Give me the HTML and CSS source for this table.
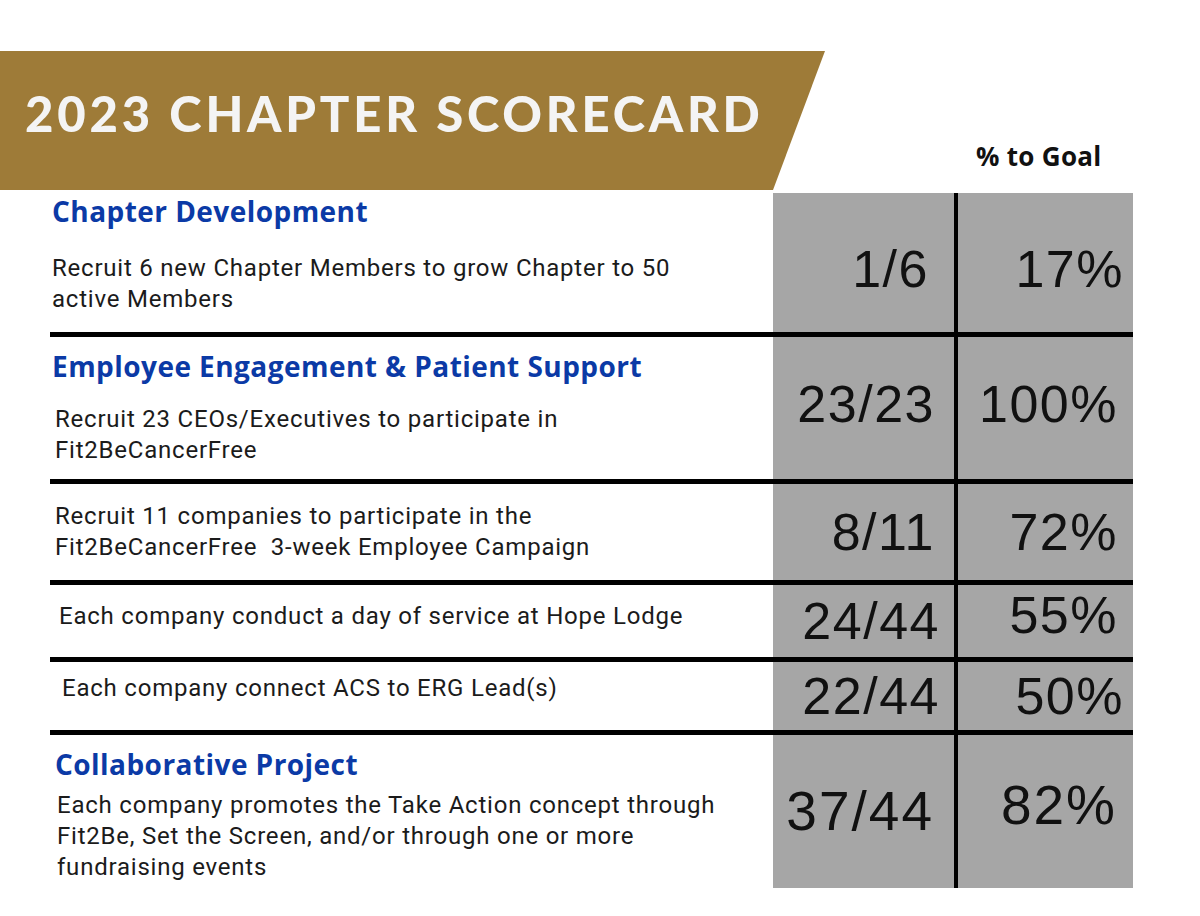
FILE: index.html
```html
<!DOCTYPE html>
<html lang="en">
<head>
<meta charset="utf-8">
<title>2023 Chapter Scorecard</title>
<link rel="stylesheet" href="styles.css">
</head>
<body>
<div class="page">
  <header class="header">
    <div class="banner"><h1 class="title">2023 CHAPTER SCORECARD</h1></div>
    <div class="goal-label">% to Goal</div>
  </header>

  <div class="table">
    <div class="row r1">
      <div class="desc ind-2">
        <h2 class="section">Chapter Development</h2>
        <p class="text first-1">Recruit 6 new Chapter Members to grow Chapter to 50<br>active Members</p>
      </div>
      <div class="num shift-down pad-r1">1/6</div>
      <div class="pct shift-down pad-p1">17%</div>
    </div>

    <div class="row r2">
      <div class="desc ind-2">
        <h2 class="section">Employee Engagement &amp; Patient Support</h2>
        <p class="text first-2 nudge">Recruit 23 CEOs/Executives to participate in<br>Fit2BeCancerFree</p>
      </div>
      <div class="num shift-up">23/23</div>
      <div class="pct shift-up">100%</div>
    </div>

    <div class="row r3">
      <div class="desc ind-5">
        <p class="text">Recruit 11 companies to participate in the<br>Fit2BeCancerFree&nbsp; 3-week Employee Campaign</p>
      </div>
      <div class="num">8/11</div>
      <div class="pct">72%</div>
    </div>

    <div class="row r4">
      <div class="desc ind-9">
        <p class="text">Each company conduct a day of service at Hope Lodge</p>
      </div>
      <div class="num pad-r4">24/44</div>
      <div class="pct shift-up-more">55%</div>
    </div>

    <div class="row r5">
      <div class="desc ind-12">
        <p class="text">Each company connect ACS to ERG Lead(s)</p>
      </div>
      <div class="num pad-r4">22/44</div>
      <div class="pct pad-p5">50%</div>
    </div>

    <div class="row r6">
      <div class="desc ind-5">
        <h2 class="section">Collaborative Project</h2>
        <p class="text first-6 nudge-sm">Each company promotes the Take Action concept through<br>Fit2Be, Set the Screen, and/or through one or more<br>fundraising events</p>
      </div>
      <div class="num big">37/44</div>
      <div class="pct big shift-up-more">82%</div>
    </div>
  </div>
</div>
</body>
</html>
```

FILE: styles.css
```css
* { box-sizing: border-box; }

html, body {
  margin: 0;
  padding: 0;
  background: #ffffff;
}

.page {
  width: 1200px;
  height: 916px;
  padding-top: 51px;
  overflow: hidden;
}

/* ---------- header ---------- */
.header {
  display: flex;
  align-items: flex-start;
}

.banner {
  width: 825px;
  height: 139px;
  background: #9e7b38;
  clip-path: polygon(0 0, 825px 0, 773px 100%, 0 100%);
  padding: 38px 0 0 25px;
  flex: none;
}

.title {
  margin: 0;
  font-family: Lato, "Open Sans", sans-serif;
  font-weight: 900;
  font-size: 49px;
  line-height: 49px;
  letter-spacing: 3.8px;
  color: #f4f4f4;
  white-space: nowrap;
}

.goal-label {
  margin: 87px 0 0 151px;
  font-family: "Open Sans", "Noto Sans", sans-serif;
  font-weight: 700;
  font-size: 26px;
  letter-spacing: 0.3px;
  color: #111111;
  white-space: nowrap;
}

/* ---------- table ---------- */
.table {
  margin: 3px 0 0 50px;
  width: 1083px;
}

.row {
  display: grid;
  grid-template-columns: 723px 181px 179px;
  border-bottom: 5px solid #000000;
}

.row.r6 { border-bottom: none; }

.r1 { height: 144px; }
.r2 { height: 147px; }
.r3 { height: 101px; }
.r4 { height: 77px; }
.r5 { height: 73px; }
.r6 { height: 153px; }

.desc {
  background: #ffffff;
  color: #1b1b1b;
}

.r1 .desc { padding-top: 1px; }
.r2 .desc { padding-top: 12px; }
.r3 .desc { padding-top: 17px; }
.r4 .desc { padding-top: 16px; }
.r5 .desc { padding-top: 11px; }
.r6 .desc { padding-top: 12px; }

.ind-2 { padding-left: 2px; }
.ind-5 { padding-left: 5px; }
.ind-9 { padding-left: 9px; }
.ind-12 { padding-left: 12px; }

.section {
  margin: 0;
  font-family: "Open Sans", "Noto Sans", sans-serif;
  font-weight: 700;
  font-size: 28px;
  line-height: 34px;
  letter-spacing: 0.45px;
  color: #0b3aa6;
  white-space: nowrap;
}

.text {
  margin: 0;
  font-family: Roboto, "Noto Sans", sans-serif;
  font-weight: 400;
  font-size: 24px;
  line-height: 31px;
  letter-spacing: 0.78px;
  color: #1b1b1b;
  white-space: nowrap;
}

.first-1 { margin-top: 25px; }
.first-2 { margin-top: 21px; }
.first-6 { margin-top: 9px; }
.nudge { padding-left: 3px; }
.nudge-sm { padding-left: 2px; }

.num, .pct {
  background: #a6a6a6;
  display: flex;
  align-items: center;
  justify-content: flex-end;
  font-family: "Liberation Sans", Arial, sans-serif;
  font-size: 52px;
  letter-spacing: 1.5px;
  color: #111111;
  line-height: 1;
}

.num { padding-right: 19px; }

.pct {
  border-left: 4px solid #000000;
  padding-right: 15px;
}

.num.pad-r1 { padding-right: 25px; }
.num.pad-r4 { padding-right: 14px; }
.pct.pad-p1 { padding-right: 9px; }
.pct.pad-p5 { padding-right: 9px; }

.num.big, .pct.big {
  font-size: 55px;
  letter-spacing: 2px;
}

.num.big { padding-right: 20px; }
.pct.big { padding-right: 16px; }

.shift-down { padding-top: 12px; }
.shift-up { padding-bottom: 9px; }
.pct.shift-up-more { padding-bottom: 12px; }
```
